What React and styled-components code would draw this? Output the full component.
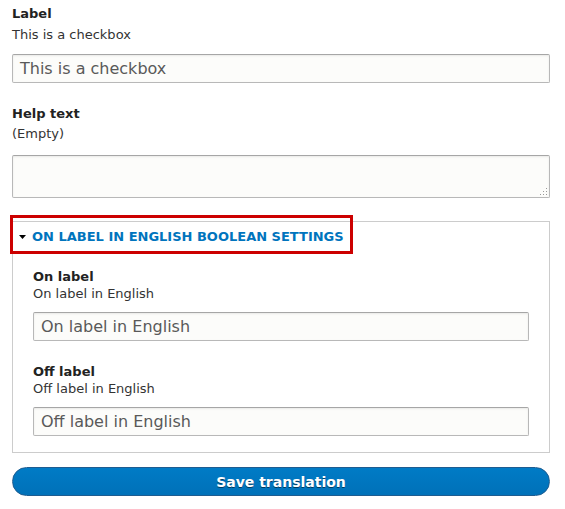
import React from "react";
import styled, { createGlobalStyle } from "styled-components";

const GlobalStyle = createGlobalStyle`
	body {
		margin: 0;
		background: #fff;
		font-family: "DejaVu Sans", "Liberation Sans", sans-serif;
		color: #222;
	}
`;

const Page = styled.div`
	padding: 5px 15px 0 12px;
`;

const Item = styled.div`
	margin-top: ${(p) => p.$top || 0}px;
`;

const Label = styled.div`
	font-size: 13px;
	line-height: 17px;
	font-weight: bold;
	color: #222;
`;

const Source = styled.div`
	margin-top: ${(p) => p.$gap || 0}px;
	font-size: 13px;
	line-height: 17px;
	color: #333;
`;

const TextInput = styled.div`
	box-sizing: border-box;
	margin-top: ${(p) => p.$gap || 10}px;
	height: 29px;
	padding: 0 7px;
	border: 1px solid #b8b8b8;
	border-top-color: #a6a6a6;
	border-radius: 2px;
	background: #fcfcfa;
	box-shadow: inset 0 1px 2px rgba(0, 0, 0, 0.08);
	font-size: 16px;
	line-height: 27px;
	color: #595959;
	white-space: nowrap;
	overflow: hidden;
`;

const TextArea = styled.div`
	position: relative;
	box-sizing: border-box;
	margin-top: 13px;
	height: 43px;
	border: 1px solid #b8b8b8;
	border-top-color: #a6a6a6;
	border-radius: 2px;
	background: #fcfcfa;
	box-shadow: inset 0 1px 2px rgba(0, 0, 0, 0.08);
`;

const Grip = styled.svg`
	position: absolute;
	right: 1px;
	bottom: 1px;
`;

const Details = styled.div`
	margin-top: 23px;
	border: 1px solid #ccc;
	background: #fff;
`;

const Summary = styled.div`
	position: relative;
	display: flex;
	align-items: center;
	gap: 6px;
	height: 30px;
	padding-left: 6px;
	font-size: 13px;
	line-height: 30px;
	font-weight: bold;
	text-transform: uppercase;
	color: #0074bd;
`;

const Highlight = styled.div`
	position: absolute;
	left: -3px;
	top: -7px;
	width: 343px;
	height: 39px;
	box-sizing: border-box;
	border: 3px solid #cc0000;
	pointer-events: none;
`;

const DetailsBody = styled.div`
	padding: 16px 20px 16px;
`;

const SaveButton = styled.button`
	display: block;
	box-sizing: border-box;
	width: 100%;
	height: 29px;
	margin-top: 14px;
	border: 1px solid #1e5c90;
	border-radius: 20em;
	background: linear-gradient(to bottom, #007bc6, #0071b8);
	color: #fff;
	font-family: "DejaVu Sans", "Liberation Sans", sans-serif;
	font-size: 14px;
	font-weight: bold;
	text-shadow: 0 1px rgba(0, 0, 0, 0.5);
	cursor: pointer;
`;

const Caret = () => (
	<svg width="7" height="4" viewBox="0 0 7 4">
		<path d="M0 0h7L3.5 4z" fill="#000" />
	</svg>
);

const Field = ({ label, source, value, top, first }) => (
	<Item $top={top}>
		<Label>{label}</Label>
		<Source $gap={first ? 4 : 0}>{source}</Source>
		<TextInput $gap={first ? 11 : 10}>{value}</TextInput>
	</Item>
);

export default function App() {
	return (
		<Page>
			<GlobalStyle />
			<Field
				first
				label="Label"
				source="This is a checkbox"
				value="This is a checkbox"
			/>
			<Item $top={22}>
				<Label>Help text</Label>
				<Source $gap={3}>(Empty)</Source>
				<TextArea>
					<Grip width="9" height="9" viewBox="0 0 9 9">
						{[
							[7, 1],
							[7, 4],
							[4, 4],
							[7, 7],
							[4, 7],
							[1, 7],
						].map(([x, y]) => (
							<rect key={`${x}-${y}`} x={x} y={y} width="1" height="1" fill="#999" />
						))}
					</Grip>
				</TextArea>
			</Item>
			<Details>
				<Summary>
					<Caret />
					<span>On label in English boolean settings</span>
					<Highlight />
				</Summary>
				<DetailsBody>
					<Field
						label="On label"
						source="On label in English"
						value="On label in English"
					/>
					<Field
						top={22}
						label="Off label"
						source="Off label in English"
						value="Off label in English"
					/>
				</DetailsBody>
			</Details>
			<SaveButton type="button">Save translation</SaveButton>
		</Page>
	);
}
